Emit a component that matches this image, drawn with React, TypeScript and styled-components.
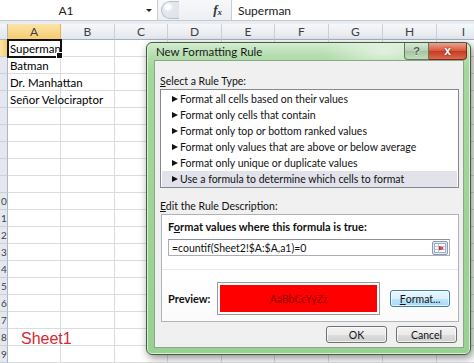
import React from "react";
import styled, { createGlobalStyle } from "styled-components";

const GlobalStyle = createGlobalStyle`
  html, body {
    margin: 0;
    padding: 0;
    background: #ffffff;
    overflow: hidden;
  }
  * {
    box-sizing: border-box;
  }
`;

const COLS = ["A", "B", "C", "D", "E", "F", "G", "H", "I"];
const COL_WIDTHS = [53, 54, 53, 54, 53, 54, 54, 54, 54];
const ROW_COUNT = 19;
const CELL_TEXT: Record<number, string> = {
  1: "Superman",
  2: "Batman",
  3: "Dr. Manhattan",
  4: "Señor Velociraptor",
};

const RULE_TYPES = [
  "Format all cells based on their values",
  "Format only cells that contain",
  "Format only top or bottom ranked values",
  "Format only values that are above or below average",
  "Format only unique or duplicate values",
  "Use a formula to determine which cells to format",
];

const Page = styled.div`
  position: relative;
  width: 474px;
  height: 363px;
  overflow: hidden;
  background: #e9edf2;
`;

/* ---------- formula bar ---------- */

const FormulaBar = styled.div`
  display: flex;
  height: 21px;
  background: #ffffff;
  border-bottom: 1px solid #c3cad3;
  font-family: "Lato", "Liberation Sans", sans-serif;
  font-size: 12px;
  color: #222;
`;

const NameBox = styled.div`
  width: 158px;
  display: flex;
  align-items: center;
  border-right: 1px solid #c8ced6;
  span {
    flex: 1;
    text-align: center;
    padding-right: 14px;
  }
  i {
    width: 0;
    height: 0;
    margin-right: 5px;
    border-left: 3px solid transparent;
    border-right: 3px solid transparent;
    border-top: 3px solid #222;
  }
`;

const FxArea = styled.div`
  width: 74px;
  display: flex;
  align-items: center;
  background: linear-gradient(#f7f8fa, #eceff3);
  border-right: 1px solid #c8ced6;
`;

const Grip = styled.div`
  width: 18px;
  height: 18px;
  margin-left: 3px;
  border: 1px solid #b8bfc9;
  border-right: none;
  border-radius: 10px 0 0 10px;
  background: radial-gradient(circle at 6px 5px, #ffffff 2px, #e4e8ee 5px, #dde2e9 100%);
`;

const Fx = styled.span`
  margin-left: auto;
  margin-right: 9px;
  font-family: "Liberation Serif", serif;
  font-style: italic;
  font-weight: bold;
  font-size: 13px;
  color: #333;
  sub {
    font-size: 9px;
    vertical-align: -1px;
  }
`;

const FormulaInput = styled.div`
  flex: 1;
  display: flex;
  align-items: center;
  padding-left: 6px;
`;

/* ---------- grid ---------- */

const Sheet = styled.div`
  margin-top: 3px;
  display: grid;
  grid-template-columns: 8px ${COL_WIDTHS.map((w) => `${w}px`).join(" ")};
  grid-template-rows: 16px repeat(${ROW_COUNT}, 17px);
  background: #ffffff;
  font-family: "Lato", "Liberation Sans", sans-serif;
`;

const Corner = styled.div`
  background: linear-gradient(#f3f5f8, #e1e6ed);
  border-right: 1px solid #a9b8c9;
  border-bottom: 1px solid #a9b8c9;
`;

const ColHead = styled.div<{ $active?: boolean }>`
  display: flex;
  align-items: center;
  justify-content: center;
  font-size: 12px;
  color: #3c4046;
  background: ${(p) =>
    p.$active
      ? "linear-gradient(#fbe3a8, #f6cd70)"
      : "linear-gradient(#f6f7f9, #e3e7ed)"};
  border-right: 1px solid ${(p) => (p.$active ? "#e2b35b" : "#c9d0d9")};
  border-bottom: 1px solid ${(p) => (p.$active ? "#e2a848" : "#9fb3c8")};
`;

/* only the last digit of two-digit row numbers peeks into the narrow header strip */
const RowHead = styled.div<{ $active?: boolean }>`
  display: flex;
  align-items: center;
  overflow: hidden;
  font-size: 10px;
  line-height: 1;
  color: #3c4046;
  background: ${(p) =>
    p.$active ? "linear-gradient(90deg, #fbe3a8, #f6cd70)" : "#e4e8ee"};
  border-right: 1px solid #a9b8c9;
  border-bottom: 1px solid #c9d0d9;
  span {
    padding-left: 1px;
  }
`;

const Cell = styled.div<{ $selected?: boolean }>`
  position: relative;
  display: flex;
  align-items: center;
  padding-left: 2px;
  white-space: nowrap;
  font-size: 11.5px;
  color: #000;
  border-right: 1px solid #dadcdd;
  border-bottom: 1px solid #dadcdd;
  ${(p) =>
    p.$selected &&
    `
    outline: 2px solid #111;
    outline-offset: -1px;
    z-index: 1;
    &::after {
      content: "";
      position: absolute;
      right: -3px;
      bottom: -3px;
      width: 5px;
      height: 5px;
      background: #111;
      border: 1px solid #fff;
    }
  `}
`;

const SheetLabel = styled.div`
  position: absolute;
  left: 21px;
  top: 330px;
  font-family: "Liberation Sans", sans-serif;
  font-size: 16px;
  color: #d42a31;
`;

/* ---------- dialog ---------- */

const Dialog = styled.div`
  position: absolute;
  left: 146px;
  top: 42px;
  width: 325px;
  height: 313px;
  display: flex;
  flex-direction: column;
  padding: 0 6px 6px 7px;
  border: 1px solid #3f5f3d;
  border-radius: 6px;
  background: linear-gradient(
    180deg,
    #d2ecce 0px,
    #b6ddb0 12px,
    #a3d79b 26px,
    #98d191 100%
  );
  box-shadow: 2px 3px 8px rgba(0, 0, 0, 0.45), inset 0 0 0 1px #d9f0d6;
  font-family: "Lato", "Liberation Sans", sans-serif;
  font-size: 10.5px;
  color: #111;
`;

const TitleBar = styled.div`
  position: relative;
  height: 24px;
  display: flex;
  align-items: center;
  padding-left: 2px;
  font-size: 11.5px;
  color: #1a1a1a;
  background: radial-gradient(
    ellipse 60px 20px at 230px 10px,
    rgba(255, 255, 255, 0.55),
    rgba(255, 255, 255, 0)
  );
`;

const CaptionButtons = styled.div`
  position: absolute;
  top: 0;
  right: -3px;
  display: flex;
`;

const CaptionButton = styled.div<{ $close?: boolean }>`
  width: ${(p) => (p.$close ? "38px" : "25px")};
  height: 17px;
  display: flex;
  align-items: center;
  justify-content: center;
  font-family: "Liberation Sans", sans-serif;
  font-weight: bold;
  font-size: ${(p) => (p.$close ? "12px" : "11px")};
  color: ${(p) => (p.$close ? "#ffffff" : "#4d5e4c")};
  border: 1px solid ${(p) => (p.$close ? "#7d2a1e" : "#5f7a5d")};
  border-top: none;
  border-left: ${(p) => (p.$close ? "none" : undefined)};
  border-radius: ${(p) => (p.$close ? "0 0 4px 0" : "0 0 0 4px")};
  background: ${(p) =>
    p.$close
      ? "linear-gradient(#eba290, #d6553c 50%, #c43c21 51%, #dc684d)"
      : "linear-gradient(#d8ead6, #b4cfb1 50%, #a2c49e 51%, #c2dcbf)"};
  text-shadow: ${(p) => (p.$close ? "0 0 2px #6b1b10" : "0 1px 0 #e8f3e6")};
`;

const Client = styled.div`
  flex: 1;
  display: flex;
  flex-direction: column;
  padding: 13px 4px 4px 5px;
  background: #f0f0f0;
  border: 1px solid #8aa886;
`;

const GroupLabel = styled.div`
  height: 14px;
  line-height: 14px;
  margin-bottom: 1px;
  u {
    text-decoration: underline;
  }
`;

const ListBox = styled.div`
  height: 99px;
  padding: 1px;
  background: #ffffff;
  border: 1px solid #828790;
`;

const ListItem = styled.div<{ $selected?: boolean }>`
  height: 16px;
  display: flex;
  align-items: center;
  padding-left: 10px;
  gap: 2px;
  white-space: nowrap;
  background: ${(p) => (p.$selected ? "#e2e3ea" : "transparent")};
  &::before {
    content: "";
    width: 0;
    height: 0;
    border-top: 3.5px solid transparent;
    border-bottom: 3.5px solid transparent;
    border-left: 6px solid #111;
  }
`;

const Spacer = styled.div<{ $h: number }>`
  flex: none;
  height: ${(p) => p.$h}px;
`;

const EditPanel = styled.div`
  height: 108px;
  display: flex;
  flex-direction: column;
  margin-left: 1px;
  background: #ffffff;
  border: 1px solid #aeb4bb;
`;

const FormulaSection = styled.div`
  height: 55px;
  padding: 5px 8px 0 6px;
  border-bottom: 1px solid #e4e6e8;
`;

const BoldLabel = styled.div`
  font-weight: bold;
  font-size: 11px;
  height: 14px;
  line-height: 14px;
  margin-bottom: 5px;
  u {
    text-decoration: underline;
  }
`;

const RefInput = styled.div`
  height: 17px;
  display: flex;
  align-items: center;
  padding: 0 1px 0 3px;
  background: #ffffff;
  border: 1px solid #abadb3;
  border-top-color: #8e9199;
  font-size: 10.5px;
  span {
    flex: 1;
  }
`;

const PreviewSection = styled.div`
  flex: 1;
  display: flex;
  align-items: center;
  padding: 6px 8px 0 6px;
  background: linear-gradient(#ffffff, #fbfbfb);
`;

const PreviewLabel = styled.div`
  width: 50px;
  font-weight: bold;
  font-size: 11px;
`;

const PreviewBox = styled.div`
  width: 167px;
  height: 33px;
  display: flex;
  align-items: center;
  justify-content: center;
  background: #ff0000;
  border: 1px solid #9a9a9a;
  box-shadow: inset 0 0 0 2px #ffffff;
  color: #8e0000;
  font-size: 10.5px;
`;

const Button = styled.div<{ $default?: boolean }>`
  width: 61px;
  height: 17px;
  display: flex;
  align-items: center;
  justify-content: center;
  border-radius: 3px;
  font-size: 10.5px;
  color: #111;
  border: 1px solid ${(p) => (p.$default ? "#3c7fb1" : "#707070")};
  background: ${(p) =>
    p.$default
      ? "linear-gradient(#eaf6fd, #d9f0fc 50%, #bee6fd 51%, #a7d9f5)"
      : "linear-gradient(#f2f2f2, #ebebeb 50%, #dddddd 51%, #cfcfcf)"};
  box-shadow: inset 0 0 0 1px rgba(255, 255, 255, 0.7);
  u {
    text-decoration: underline;
  }
`;

const FormatButton = styled(Button)`
  margin-left: 10px;
`;

const ButtonRow = styled.div`
  display: flex;
  justify-content: flex-end;
  gap: 9px;
  margin-top: 4px;
  padding-right: 2px;
`;

const CollapseIcon = () => (
  <svg width="16" height="14" viewBox="0 0 16 14">
    <rect x="0.5" y="0.5" width="15" height="13" rx="1.5" fill="#dfe9f5" stroke="#8a9bb3" />
    <rect x="2.5" y="2.5" width="11" height="9" fill="#ffffff" stroke="#9fb0c6" />
    <line x1="2.5" y1="5.5" x2="13.5" y2="5.5" stroke="#b7c4d6" />
    <line x1="2.5" y1="8.5" x2="13.5" y2="8.5" stroke="#b7c4d6" />
    <line x1="6.5" y1="2.5" x2="6.5" y2="11.5" stroke="#b7c4d6" />
    <path d="M7 5 L12 7 L7 9.5 Z" fill="#d42323" />
    <rect x="8" y="6" width="3" height="2.5" fill="#e84040" />
  </svg>
);

const App = () => {
  const rows = Array.from({ length: ROW_COUNT }, (_, i) => i + 1);
  return (
    <>
      <GlobalStyle />
      <Page>
        <FormulaBar>
          <NameBox>
            <span>A1</span>
            <i />
          </NameBox>
          <FxArea>
            <Grip />
            <Fx>
              f<sub>x</sub>
            </Fx>
          </FxArea>
          <FormulaInput>Superman</FormulaInput>
        </FormulaBar>

        <Sheet>
          <Corner />
          {COLS.map((c, i) => (
            <ColHead key={c} $active={i === 0}>
              {c}
            </ColHead>
          ))}
          {rows.map((r) => (
            <React.Fragment key={r}>
              <RowHead $active={r === 1}>
                {r >= 10 && <span>{r % 10}</span>}
              </RowHead>
              {COLS.map((c, i) => (
                <Cell key={c} $selected={r === 1 && i === 0}>
                  {i === 0 ? CELL_TEXT[r] ?? "" : ""}
                </Cell>
              ))}
            </React.Fragment>
          ))}
        </Sheet>

        <SheetLabel>Sheet1</SheetLabel>

        <Dialog>
          <TitleBar>
            New Formatting Rule
            <CaptionButtons>
              <CaptionButton>?</CaptionButton>
              <CaptionButton $close>x</CaptionButton>
            </CaptionButtons>
          </TitleBar>
          <Client>
            <GroupLabel>
              <u>S</u>elect a Rule Type:
            </GroupLabel>
            <ListBox>
              {RULE_TYPES.map((t, i) => (
                <ListItem key={t} $selected={i === RULE_TYPES.length - 1}>
                  {t}
                </ListItem>
              ))}
            </ListBox>
            <Spacer $h={11} />
            <GroupLabel>
              <u>E</u>dit the Rule Description:
            </GroupLabel>
            <EditPanel>
              <FormulaSection>
                <BoldLabel>
                  F<u>o</u>rmat values where this formula is true:
                </BoldLabel>
                <RefInput>
                  <span>=countif(Sheet2!$A:$A,a1)=0</span>
                  <CollapseIcon />
                </RefInput>
              </FormulaSection>
              <PreviewSection>
                <PreviewLabel>Preview:</PreviewLabel>
                <PreviewBox>AaBbCcYyZz</PreviewBox>
                <FormatButton $default>
                  <u>F</u>ormat...
                </FormatButton>
              </PreviewSection>
            </EditPanel>
            <ButtonRow>
              <Button>OK</Button>
              <Button>Cancel</Button>
            </ButtonRow>
          </Client>
        </Dialog>
      </Page>
    </>
  );
};

export default App;
